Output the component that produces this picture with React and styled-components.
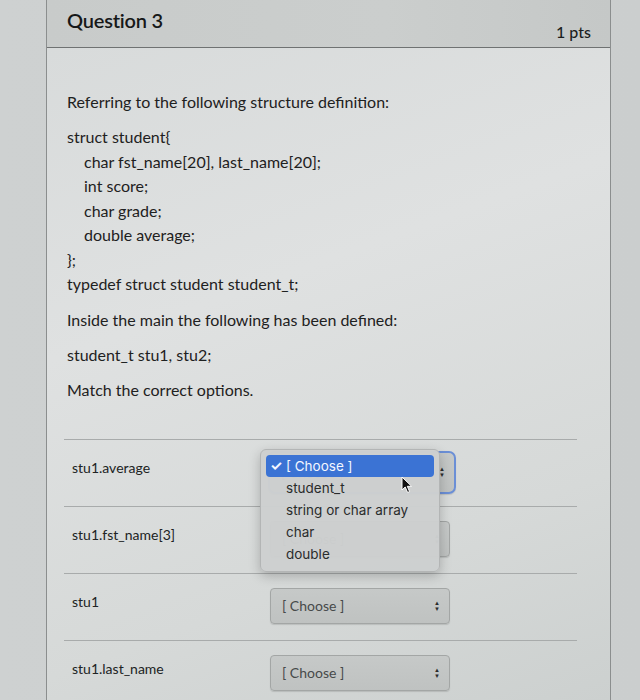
import React from 'react';
import styled, { createGlobalStyle } from 'styled-components';

const GlobalStyle = createGlobalStyle`
  html, body {
    margin: 0;
    padding: 0;
    background: #cdd0d0;
    font-family: Lato, "Open Sans", sans-serif;
    color: #1e2121;
  }
`

const Page = styled.div`
  display: flex;
  height: 700px;
  overflow: hidden;
  padding-left: 46px;
  background: linear-gradient(90deg, #ced1d1 0%, #cbcece 100%);
`

const Card = styled.div`
  width: 563px;
  flex-shrink: 0;
  border-left: 1px solid #8b8e8e;
  border-right: 1px solid #8b8e8e;
  display: flex;
  flex-direction: column;
  background: linear-gradient(160deg, #d7dada 0%, #dfe1e1 40%, #d6d9d8 75%, #ccd0cf 100%);
`

const Header = styled.div`
  height: 48px;
  flex-shrink: 0;
  box-sizing: border-box;
  display: flex;
  justify-content: space-between;
  align-items: flex-start;
  padding: 0 19px 0 20px;
  background: linear-gradient(90deg, #c8cbca 0%, #cbcecd 60%, #c5c8c7 100%);
  border-bottom: 1px solid #6f7272;
`

const Title = styled.h2`
  margin: 8px 0 0;
  font-size: 20px;
  font-weight: 600;
  letter-spacing: -0.2px;
  color: #161818;
`

const Points = styled.span`
  margin-top: 22px;
  font-size: 16px;
  font-weight: 500;
  color: #1c1e1e;
`

const Body = styled.div`
  padding: 42px 32px 0 20px;
`

const Para = styled.p`
  margin: 0 0 11px;
  font-size: 16px;
  line-height: 24px;
`

const Code = styled.div`
  margin: 0 0 11px;
  font-size: 16px;
  line-height: 24.5px;
`

const Line = styled.div`
  padding-left: ${({ $indent }) => ($indent ? '17px' : '0')};
`

const MatchList = styled.div`
  margin: 37px 1px 0 -3px;
`

const Row = styled.div`
  position: relative;
  display: flex;
  align-items: flex-start;
  height: 66px;
  border-top: 1px solid #a8abab;
`

const Label = styled.div`
  width: 198px;
  padding: 18px 0 0 8px;
  font-size: 14px;
  line-height: 20px;
  color: #202323;
`

const Select = styled.div`
  position: relative;
  box-sizing: border-box;
  margin-top: ${({ $focused }) => ($focused ? '11px' : '14px')};
  margin-left: ${({ $focused }) => ($focused ? '-2px' : '0')};
  width: ${({ $focused }) => ($focused ? '188px' : '180px')};
  height: ${({ $focused }) => ($focused ? '43px' : '36px')};
  display: flex;
  align-items: center;
  justify-content: space-between;
  padding: 0 9px 0 11px;
  background: linear-gradient(180deg, #c6c9c8 0%, #bfc2c1 100%);
  border: ${({ $focused }) => ($focused ? '2px solid #6b8fd6' : '1px solid #a3a6a5')};
  border-radius: ${({ $focused }) => ($focused ? '7px' : '4px')};
  box-shadow: 0 1px 1px rgba(0, 0, 0, 0.12);
  font-size: 14px;
  color: #474a4a;
`

const Arrows = styled.span`
  display: flex;
  flex-direction: column;
  align-items: center;
  font-size: 6px;
  line-height: 6px;
  color: #2a2c2c;
`

const Menu = styled.div`
  position: absolute;
  left: 196px;
  top: 9px;
  z-index: 2;
  width: 180px;
  box-sizing: border-box;
  padding: 5px 5px 6px;
  background: rgba(205, 207, 207, 0.98);
  border: 1px solid #b3b5b5;
  border-radius: 6px;
  box-shadow: 0 4px 12px rgba(0, 0, 0, 0.22);
  font-family: Inter, "Open Sans", sans-serif;
  font-size: 13.5px;
`

const Option = styled.div`
  display: flex;
  align-items: center;
  height: 22px;
  padding-left: ${({ $active }) => ($active ? '4px' : '20px')};
  border-radius: 4px;
  background: ${({ $active }) => ($active ? '#3b73d4' : 'transparent')};
  color: ${({ $active }) => ($active ? '#f4f7ff' : '#2a2c2c')};
`

const Check = styled.span`
  width: 16px;
  font-size: 14px;
  font-weight: 700;
`

const Cursor = styled.svg`
  position: absolute;
  left: 140px;
  top: 26px;
  z-index: 3;
`

const rows = [
  { label: 'stu1.average', open: true },
  { label: 'stu1.fst_name[3]' },
  { label: 'stu1' },
  { label: 'stu1.last_name' },
]

const options = ['student_t', 'string or char array', 'char', 'double']

function ChooseBox({ focused }) {
  return (
    <Select $focused={focused}>
      <span>[ Choose ]</span>
      <Arrows>
        <span>▲</span>
        <span>▼</span>
      </Arrows>
    </Select>
  )
}

export default function App() {
  return (
    <>
      <GlobalStyle />
      <Page>
        <Card>
          <Header>
            <Title>Question 3</Title>
            <Points>1 pts</Points>
          </Header>
          <Body>
            <Para>Referring to the following structure definition:</Para>
            <Code>
              <Line>struct student&#123;</Line>
              <Line $indent>char fst_name[20], last_name[20];</Line>
              <Line $indent>int score;</Line>
              <Line $indent>char grade;</Line>
              <Line $indent>double average;</Line>
              <Line>&#125;;</Line>
              <Line>typedef struct student student_t;</Line>
            </Code>
            <Para>Inside the main the following has been defined:</Para>
            <Para>student_t stu1, stu2;</Para>
            <Para>Match the correct options.</Para>

            <MatchList>
              {rows.map((r) => (
                <Row key={r.label}>
                  <Label>{r.label}</Label>
                  <ChooseBox focused={r.open} />
                  {r.open && (
                    <Menu>
                      <Option $active>
                        <Check>✓</Check>[ Choose ]
                      </Option>
                      {options.map((o) => (
                        <Option key={o}>{o}</Option>
                      ))}
                      <Cursor width="12" height="18" viewBox="0 0 12 18">
                        <path d="M1 1 L1 14 L4.2 11 L6.6 16.5 L8.6 15.6 L6.3 10.3 L10.6 10.3 Z" fill="#111" stroke="#fff" strokeWidth="1" />
                      </Cursor>
                    </Menu>
                  )}
                </Row>
              ))}
            </MatchList>
          </Body>
        </Card>
      </Page>
    </>
  )
}
